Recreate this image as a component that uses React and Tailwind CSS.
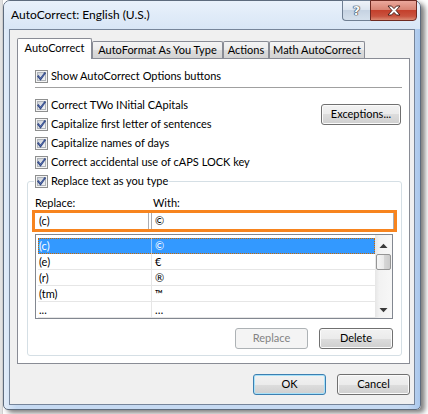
import React from "react";

function Check() {
  return (
    <svg width="13" height="13" viewBox="0 0 13 13" className="shrink-0">
      <defs>
        <linearGradient id="cbg" x1="0" y1="0" x2="1" y2="1">
          <stop offset="0" stopColor="#c9ced6" />
          <stop offset="1" stopColor="#f7f7f7" />
        </linearGradient>
      </defs>
      <rect x="0.5" y="0.5" width="12" height="12" fill="#f4f4f4" stroke="#8e8f8f" />
      <rect x="2.5" y="2.5" width="8" height="8" fill="url(#cbg)" stroke="#aeb3b9" strokeWidth="1" />
      <path d="M3.3 6.4 L5.5 9.1 L9.8 3.3" fill="none" stroke="#2f4583" strokeWidth="1.9" strokeLinecap="square" strokeLinejoin="miter" />
      <path d="M3.6 6.5 L5.5 8.6 L9.6 3.6" fill="none" stroke="#6b86c4" strokeWidth="0.6" />
    </svg>
  );
}

function CheckRow({ label }) {
  return (
    <div className="flex items-center h-[19px] gap-[3px] whitespace-nowrap">
      <Check />
      <span>{label}</span>
    </div>
  );
}

function Btn({ children, w, disabled, def }) {
  if (disabled) {
    return (
      <div className={"h-[21px] flex items-center justify-center rounded-[3px] border border-[#adb2b5] bg-[#f4f4f4] text-[#838383] " + w}>
        {children}
      </div>
    );
  }
  if (def) {
    return (
      <div className={"h-[21px] flex items-center justify-center rounded-[3px] border border-[#3c7fb1] shadow-[inset_0_0_0_1px_#a8e1f8] bg-[linear-gradient(to_bottom,#f2f2f2_0%,#ebebeb_50%,#dddddd_50%,#cfcfcf_100%)] " + w}>
        {children}
      </div>
    );
  }
  return (
    <div className={"h-[21px] flex items-center justify-center rounded-[3px] border border-[#707070] shadow-[inset_0_0_0_1px_#fbfbfb] bg-[linear-gradient(to_bottom,#f2f2f2_0%,#ebebeb_50%,#dddddd_50%,#cfcfcf_100%)] " + w}>
      {children}
    </div>
  );
}

function Row({ a, b, selected }) {
  if (selected) {
    return (
      <div className="flex h-[16px] bg-[#3399ff] text-white outline outline-1 outline-dotted outline-[#cc6600] -outline-offset-1 leading-[16px]">
        <div className="w-[113px] pl-[1px]">{a}</div>
        <div className="flex-1 border-l border-[#9cc9f7] pl-[3px]">{b}</div>
      </div>
    );
  }
  return (
    <div className="flex h-[16px] border-b border-[#e6e6e6] leading-[15px]">
      <div className="w-[113px] pl-[1px]">{a}</div>
      <div className="flex-1 border-l border-[#e6e6e6] pl-[3px]">{b}</div>
    </div>
  );
}

const tabCls =
  "h-[17px] border border-b-0 border-[#898c95] rounded-t-[2px] bg-[linear-gradient(to_bottom,#f4f4f4,#ebebeb_50%,#dddddd_50%,#d3d3d3)] flex items-center justify-center whitespace-nowrap";

export default function App() {
  return (
    <div className="w-[428px] h-[414px] bg-white flex overflow-hidden font-['Lato',sans-serif] text-[11px] text-black">
      <div className="w-[3px] h-full bg-[#e2e2e2] border-r border-[#d0d0d0]" />
      <div className="w-[418px] h-[410px] flex flex-col border border-[#5d6b7d] rounded-t-[7px] rounded-b-[5px] bg-[linear-gradient(to_right,#e3edf9,#c6daf2_3%,#c6daf2_97%,#a9c7ec)] shadow-[4px_3px_5px_rgba(0,0,0,0.5)]">
        {/* title bar */}
        <div className="h-[28px] flex items-start rounded-t-[6px] bg-[linear-gradient(to_bottom,#e9f1fb,#d8e6f6)]">
          <div className="h-[28px] flex items-center pl-[7px] pb-[1px] text-[12px] whitespace-nowrap">AutoCorrect: English (U.S.)</div>
          <div className="ml-auto mr-[3px] -mt-px flex h-[21px]">
            <div className="w-[28px] h-[21px] rounded-bl-[4px] border border-[#6f7f93] border-r-0 bg-[linear-gradient(to_bottom,#eef3f9,#dbe4ef_50%,#c6d3e2_50%,#d5e0ec)] flex items-center justify-center">
              <span className="font-['DejaVu_Sans',sans-serif] font-bold text-[13px] text-[#f7f9fb] [text-shadow:0_0_1px_#1f2a3a,0_0_1px_#1f2a3a,0_0_1px_#1f2a3a]">?</span>
            </div>
            <div className="w-[47px] h-[21px] rounded-br-[4px] border border-[#6e2a22] bg-[linear-gradient(to_bottom,#eba89c,#d98575_45%,#c4402c_50%,#c9533f_80%,#db8a73)] flex items-center justify-center">
              <svg width="14" height="11" viewBox="0 0 14 11">
                <path d="M1 1 H4.5 L7 3.6 L9.5 1 H13 L9 5.5 L13 10 H9.5 L7 7.4 L4.5 10 H1 L5 5.5 Z" fill="#ffffff" stroke="#3b1410" strokeWidth="0.9" strokeLinejoin="round" />
              </svg>
            </div>
          </div>
        </div>
        {/* client */}
        <div className="mx-[5px] h-[376px] border border-[#76859a] bg-[#f0f0f0] flex flex-col">
          {/* tabs */}
          <div className="mt-[8px] ml-[7px] flex items-end h-[20px]">
            <div className="relative z-10 -mb-px h-[21px] w-[75px] bg-white border border-b-0 border-[#898c95] rounded-t-[2px] flex items-center justify-center pb-[1px] whitespace-nowrap">AutoCorrect</div>
            <div className={tabCls + " w-[131px]"}>AutoFormat As You Type</div>
            <div className={tabCls + " w-[46px]"}>Actions</div>
            <div className={tabCls + " w-[96px]"}>Math AutoCorrect</div>
          </div>
          {/* panel */}
          <div className="ml-[7px] w-[393px] h-[306px] border border-[#898c95] bg-white flex flex-col">
            <div className="mt-[8px] pl-[17px]">
              <CheckRow label="Show AutoCorrect Options buttons" />
            </div>
            <div className="mt-px ml-[17px] w-[367px] h-px bg-[#a0a0a0]" />
            <div className="mt-[8px] flex">
              <div className="pl-[17px] flex flex-col">
                <CheckRow label="Correct TWo INitial CApitals" />
                <CheckRow label="Capitalize first letter of sentences" />
                <CheckRow label="Capitalize names of days" />
                <CheckRow label="Correct accidental use of cAPS LOCK key" />
              </div>
              <div className="ml-auto mr-[8px] mt-[8px]">
                <Btn w="w-[80px]">Exceptions...</Btn>
              </div>
            </div>
            <fieldset className="ml-[9px] w-[375px] border border-[#d5dfe5] rounded-[3px] pb-[6px]">
              <legend className="ml-[6px] px-[1px]">
                <CheckRow label="Replace text as you type" />
              </legend>
              <div className="mt-[5px] ml-[7px] flex h-[14px] leading-[14px]">
                <div className="w-[118px]">Replace:</div>
                <div>With:</div>
              </div>
              <div className="ml-[4px] w-[365px] h-[22px] border-[3px] border-[#f7841e] flex bg-white">
                <div className="w-[114px] h-full border-r border-[#abadb3] pl-[4px] flex items-center pt-[1px]">(c)</div>
                <div className="ml-[2px] flex-1 h-full border-l border-r border-[#abadb3] pl-[3px] flex items-center pt-[1px]">©</div>
              </div>
              <div className="mt-[2px] ml-[7px] w-[358px] h-[85px] border border-[#828790] bg-white flex">
                <div className="w-[339px] pl-[2px] pt-[3px] flex flex-col">
                  <Row a="(c)" b="©" selected />
                  <Row a="(e)" b="€" />
                  <Row a="(r)" b="®" />
                  <Row a="(tm)" b="™" />
                  <Row a="..." b="…" />
                </div>
                <div className="w-[17px] h-full pt-[2px] flex flex-col bg-[linear-gradient(to_right,#e6e6e6,#f2f2f2_25%,#f7f7f7)]">
                  <div className="h-[17px] flex items-center justify-center">
                    <svg width="9" height="6" viewBox="0 0 9 6"><polygon points="0.5,5 4.5,0.8 8.5,5" fill="#3a3a3a" /></svg>
                  </div>
                  <div className="mx-[1px] h-[16px] rounded-[2px] border border-[#959595] bg-[linear-gradient(to_right,#f6f6f6,#eaeaea_50%,#d8d8d8_50%,#cbcbcb)]" />
                  <div className="flex-1" />
                  <div className="h-[17px] flex items-center justify-center">
                    <svg width="9" height="6" viewBox="0 0 9 6"><polygon points="0.5,1 8.5,1 4.5,5.2" fill="#3a3a3a" /></svg>
                  </div>
                </div>
              </div>
              <div className="mt-[9px] pr-[8px] flex justify-end gap-[11px]">
                <Btn w="w-[73px]" disabled>Replace</Btn>
                <Btn w="w-[74px]">Delete</Btn>
              </div>
            </fieldset>
          </div>
          {/* dialog buttons */}
          <div className="mt-[10px] pr-[4px] flex justify-end gap-[11px]">
            <Btn w="w-[73px]" def>OK</Btn>
            <Btn w="w-[73px]">Cancel</Btn>
          </div>
        </div>
      </div>
    </div>
  );
}
